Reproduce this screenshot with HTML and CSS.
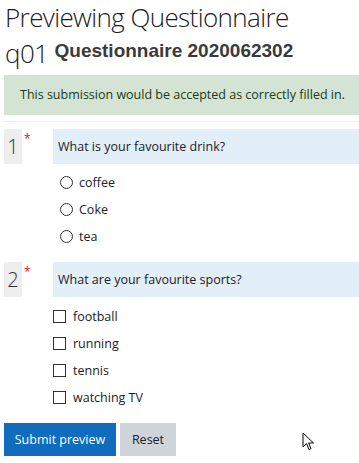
FILE: index.html
```html
<!DOCTYPE html>
<html>
<head>
<meta charset="utf-8">
<link rel="stylesheet" href="styles.css">
</head>
<body>
<div class="page">
  <h1 class="title">Previewing Questionnaire<br>q01 <span class="subtitle">Questionnaire 2020062302</span></h1>
  <div class="alert">This submission would be accepted as correctly filled in.</div>
  <div class="divider"></div>

  <div class="question">
    <div class="qhead">
      <div class="qnum">1</div>
      <span class="req">*</span>
      <div class="qtext">What is your favourite drink?</div>
    </div>
    <div class="options radios">
      <label class="opt"><span class="radio"></span>coffee</label>
      <label class="opt"><span class="radio"></span>Coke</label>
      <label class="opt"><span class="radio"></span>tea</label>
    </div>
  </div>

  <div class="question q2">
    <div class="qhead">
      <div class="qnum">2</div>
      <span class="req">*</span>
      <div class="qtext">What are your favourite sports?</div>
    </div>
    <div class="options checks">
      <label class="opt"><span class="check"></span>football</label>
      <label class="opt"><span class="check"></span>running</label>
      <label class="opt"><span class="check"></span>tennis</label>
      <label class="opt"><span class="check"></span>watching TV</label>
    </div>
  </div>

  <div class="buttons">
    <button class="btn primary">Submit preview</button>
    <button class="btn secondary">Reset</button>
  </div>
</div>
<svg class="cursor" width="13" height="20" viewBox="0 0 13 20"><path d="M1 1 L1 15 L4.5 11.5 L7 17.5 L9 16.7 L6.6 11 L11.5 11 Z" fill="#fff" stroke="#000" stroke-width="1" stroke-linejoin="miter"/></svg>
</body>
</html>
```
FILE: styles.css
```css
html, body {
  margin: 0;
  padding: 0;
  background: #fff;
}
body {
  font-family: "Open Sans", "Noto Sans", sans-serif;
  color: #1d2125;
  overflow: hidden;
  width: 359px;
  height: 463px;
  position: relative;
}
.page {
  padding: 0 0 0 4px;
}
.title {
  margin: 0;
  padding: 0 0 0 1px;
  font-family: "Open Sans", sans-serif;
  font-weight: 300;
  font-size: 26px;
  line-height: 34px;
  color: #1d2125;
  letter-spacing: -0.6px;
}
.subtitle {
  font-family: "Liberation Sans", Arial, sans-serif;
  font-weight: 700;
  font-size: 19px;
  color: #3a3a3a;
  letter-spacing: 0;
  margin-left: 0;
  vertical-align: 6px;
}
.alert {
  margin-top: 5px;
  background: #d3e3d4;
  color: #1c3b20;
  font-size: 12.5px;
  height: 40px;
  line-height: 40px;
  padding-left: 16px;
}
.divider {
  margin-top: 6px;
  height: 1px;
  background: #eeeeee;
}
.question {
  margin-top: 7px;
}
.q2 {
  margin-top: 12px;
}
.qhead {
  display: flex;
  align-items: flex-start;
}
.qnum {
  width: 18px;
  height: 35px;
  background: #eeeeee;
  font-size: 20px;
  font-weight: 300;
  line-height: 35px;
  text-align: center;
  color: #333;
}
.req {
  color: #e81123;
  font-size: 12px;
  line-height: 12px;
  margin: 4px 0 0 2px;
  width: 29px;
}
.qtext {
  flex: 1;
  height: 35px;
  line-height: 35px;
  background: #e2eef8;
  font-size: 12.5px;
  padding-left: 5px;
  color: #1d2125;
}
.options {
  display: flex;
  flex-direction: column;
  font-size: 12.5px;
}
.radios {
  padding: 5px 0 0 56px;
}
.checks {
  padding: 6px 0 0 49px;
}
.opt {
  display: flex;
  align-items: center;
  height: 27px;
}
.radio {
  width: 11px;
  height: 11px;
  border: 1px solid #333;
  border-radius: 50%;
  margin-right: 6px;
  box-sizing: content-box;
}
.check {
  width: 11px;
  height: 11px;
  border: 1px solid #333;
  margin-right: 7px;
}
.buttons {
  display: flex;
  gap: 4px;
  margin-top: 12px;
}
.btn {
  font-family: "Open Sans", sans-serif;
  font-size: 12.5px;
  height: 33px;
  border: none;
  border-radius: 0;
  padding: 0 6px;
}
.primary {
  background: #0f6cbf;
  color: #fff;
  width: 112px;
}
.secondary {
  background: #ced4da;
  color: #1d2125;
  width: 56px;
}
.cursor {
  position: absolute;
  left: 302px;
  top: 432px;
}
```
